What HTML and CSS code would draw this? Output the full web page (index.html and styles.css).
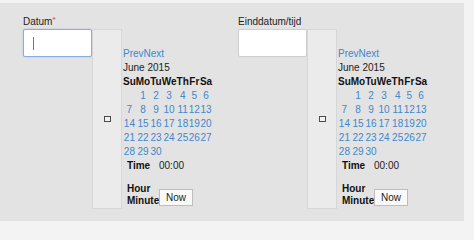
FILE: index.html
```html
<!DOCTYPE html>
<html>
<head>
<meta charset="utf-8">
<link rel="stylesheet" href="styles.css">
</head>
<body>
<div class="page">
  <div class="field">
    <div class="label">Datum<span class="req">*</span></div>
    <div class="row">
      <div class="input focused"><span class="caret"></span></div>
      <div class="trigger"><span class="box"></span></div>
      <div class="cal">
        <div class="nav"><a>Prev</a><a>Next</a></div>
        <div class="title">June 2015</div>
        <table class="days">
          <thead><tr><th>Su</th><th>Mo</th><th>Tu</th><th>We</th><th>Th</th><th>Fr</th><th>Sa</th></tr></thead>
          <tbody>
            <tr><td></td><td><a>1</a></td><td><a>2</a></td><td><a>3</a></td><td><a>4</a></td><td><a>5</a></td><td><a>6</a></td></tr>
            <tr><td><a>7</a></td><td><a>8</a></td><td><a>9</a></td><td><a>10</a></td><td><a>11</a></td><td><a>12</a></td><td><a>13</a></td></tr>
            <tr><td><a>14</a></td><td><a>15</a></td><td><a>16</a></td><td><a>17</a></td><td><a>18</a></td><td><a>19</a></td><td><a>20</a></td></tr>
            <tr><td><a>21</a></td><td><a>22</a></td><td><a>23</a></td><td><a>24</a></td><td><a>25</a></td><td><a>26</a></td><td><a>27</a></td></tr>
            <tr><td><a>28</a></td><td><a>29</a></td><td><a>30</a></td><td></td><td></td><td></td><td></td></tr>
          </tbody>
        </table>
        <div class="tp">
          <div class="tp-time"><span class="tp-label">Time</span><span>00:00</span></div>
          <div class="tp-hour tp-label">Hour</div>
          <div class="tp-min"><span class="tp-label">Minute</span><span class="now">Now</span></div>
        </div>
      </div>
    </div>
  </div>
  <div class="field">
    <div class="label">Einddatum/tijd</div>
    <div class="row">
      <div class="input"></div>
      <div class="trigger"><span class="box"></span></div>
      <div class="cal">
        <div class="nav"><a>Prev</a><a>Next</a></div>
        <div class="title">June 2015</div>
        <table class="days">
          <thead><tr><th>Su</th><th>Mo</th><th>Tu</th><th>We</th><th>Th</th><th>Fr</th><th>Sa</th></tr></thead>
          <tbody>
            <tr><td></td><td><a>1</a></td><td><a>2</a></td><td><a>3</a></td><td><a>4</a></td><td><a>5</a></td><td><a>6</a></td></tr>
            <tr><td><a>7</a></td><td><a>8</a></td><td><a>9</a></td><td><a>10</a></td><td><a>11</a></td><td><a>12</a></td><td><a>13</a></td></tr>
            <tr><td><a>14</a></td><td><a>15</a></td><td><a>16</a></td><td><a>17</a></td><td><a>18</a></td><td><a>19</a></td><td><a>20</a></td></tr>
            <tr><td><a>21</a></td><td><a>22</a></td><td><a>23</a></td><td><a>24</a></td><td><a>25</a></td><td><a>26</a></td><td><a>27</a></td></tr>
            <tr><td><a>28</a></td><td><a>29</a></td><td><a>30</a></td><td></td><td></td><td></td><td></td></tr>
          </tbody>
        </table>
        <div class="tp">
          <div class="tp-time"><span class="tp-label">Time</span><span>00:00</span></div>
          <div class="tp-hour tp-label">Hour</div>
          <div class="tp-min"><span class="tp-label">Minute</span><span class="now">Now</span></div>
        </div>
      </div>
    </div>
  </div>
</div>
</body>
</html>
```

FILE: styles.css
```css
html, body {
  margin: 0;
  padding: 0;
  background: #f3f3f3;
}
body {
  font-family: "Liberation Sans", Arial, sans-serif;
  font-size: 10px;
  color: #222;
}
.page {
  margin-top: 3px;
  width: 464px;
  height: 218px;
  background: #e3e3e3;
  box-sizing: border-box;
  padding: 13px 0 0 23px;
  display: flex;
}
.field {
  width: 215px;
  display: flex;
  flex-direction: column;
}
.label {
  line-height: 12px;
  height: 12px;
  color: #222;
}
.req {
  color: #d12c2c;
  font-size: 8px;
  vertical-align: top;
  line-height: 8px;
}
.row {
  margin-top: 1px;
  display: flex;
  align-items: flex-start;
}
.input {
  width: 69px;
  height: 28px;
  box-sizing: border-box;
  background: #fff;
  border: 1px solid #cfcfcf;
  border-radius: 2px;
  display: flex;
  align-items: center;
}
.input.focused {
  border-color: #86aee0;
  box-shadow: 0 0 2px #9dbfe9;
}
.caret {
  display: block;
  width: 1px;
  height: 13px;
  margin-left: 9px;
  background: #777;
}
.trigger {
  width: 30px;
  height: 180px;
  box-sizing: border-box;
  background: #ebebeb;
  border: 1px solid #d7d7d7;
  display: flex;
  align-items: center;
  justify-content: center;
}
.box {
  display: block;
  width: 7px;
  height: 6px;
  box-sizing: border-box;
  border: 1px solid #4a4a4a;
  background: #f2f2f2;
}
.cal {
  margin-top: 18px;
  margin-left: 1px;
  line-height: 14px;
}
.nav a, .days a {
  color: #4088cc;
}
.title {
  color: #222;
}
.days {
  border-collapse: collapse;
  border-spacing: 0;
}
.days th, .days td {
  padding: 0;
  line-height: 14px;
  height: 14px;
  text-align: center;
}
.days th {
  font-weight: bold;
  color: #111;
}
.tp {
  padding-left: 4px;
}
.tp-label {
  font-weight: bold;
  display: inline-block;
  width: 32px;
  color: #111;
}
.tp-time {
  line-height: 14px;
}
.tp-hour {
  display: block;
  margin-top: 10px;
  line-height: 12px;
}
.tp-min {
  display: flex;
  align-items: flex-end;
  height: 12px;
  line-height: 12px;
}
.now {
  display: block;
  flex: none;
  height: 17px;
  line-height: 15px;
  box-sizing: border-box;
  padding: 0 6px;
  border: 1px solid #bdbdbd;
  background: #fafafa;
  color: #222;
  margin-bottom: 1px;
}
```
